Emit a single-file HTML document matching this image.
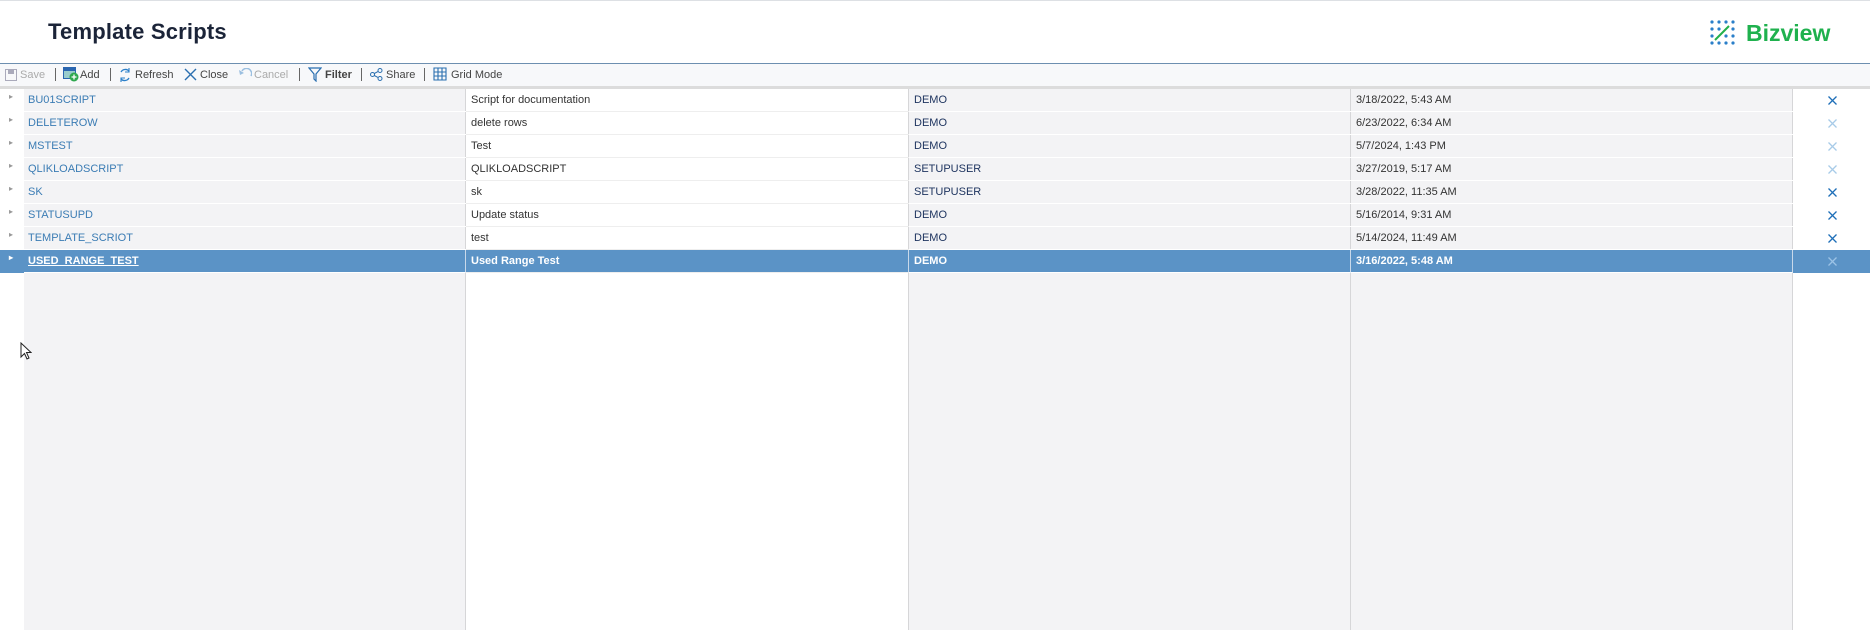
<!DOCTYPE html>
<html><head><meta charset="utf-8"><style>
*{box-sizing:border-box;margin:0;padding:0}
body{width:1870px;height:630px;overflow:hidden;background:#fff;font-family:"Liberation Sans",sans-serif;position:relative}
.abs{position:absolute}
.title{left:48px;top:19px;font-size:22px;font-weight:bold;color:#1b2438;letter-spacing:0.2px}
.tb{left:0;top:63px;width:1870px;height:23px;background:#f7f8fa;border-top:1px solid #6d8fb0}
.tbs{left:0;top:86px;width:1870px;height:3px;background:#dcdcdc}
.ti{position:absolute;top:69px;font-size:11px;color:#444;line-height:13px}
.sep{position:absolute;top:68px;width:1px;height:13px;background:#666}
.col{position:absolute;top:89px;height:541px}
.row{position:absolute;left:0;width:1870px;height:23px;font-size:11px;line-height:22px}
.c{position:absolute;top:0;height:23px;padding-left:4px;white-space:nowrap;border-bottom:1px solid #fff}
</style></head><body>
<div class="abs" style="left:0;top:0;width:1870px;height:1px;background:#dde0e4"></div>
<div class="abs title">Template Scripts</div>
<svg class="abs" style="left:1710px;top:20px" width="28" height="26" viewBox="0 0 28 26">
<g fill="#2a7fc9">
<circle cx="2" cy="2" r="1.6"/><circle cx="9" cy="2" r="1.6"/><circle cx="16" cy="2" r="1.6"/><circle cx="23" cy="2" r="1.6"/>
<circle cx="2" cy="9" r="1.6"/><circle cx="9" cy="9" r="1.6"/><circle cx="23" cy="9" r="1.6"/>
<circle cx="2" cy="16" r="1.6"/><circle cx="16" cy="16" r="1.6"/><circle cx="23" cy="16" r="1.6"/>
<circle cx="2" cy="23" r="1.6"/><circle cx="9" cy="23" r="1.6"/><circle cx="16" cy="23" r="1.6"/><circle cx="23" cy="23" r="1.6"/></g>
<line x1="5" y1="20" x2="19" y2="6" stroke="#22b04b" stroke-width="2"/></svg>
<div class="abs" style="left:1746px;top:20px;font-size:23px;font-weight:bold;color:#1fb14e">Bizview</div>

<div class="abs tb"></div><div class="abs tbs"></div>
<svg class="abs" style="left:5px;top:69px" width="12" height="12"><rect x="0.5" y="0.5" width="11" height="11" fill="none" stroke="#aab"/><rect x="3" y="1" width="6" height="4" fill="#aab"/></svg>
<div class="ti" style="left:20px;color:#aaa">Save</div><div class="sep" style="left:55px"></div>
<svg class="abs" style="left:63px;top:67px" width="16" height="15"><rect x="0" y="0" width="13" height="12" fill="#2a66b0"/><rect x="1" y="4" width="11" height="7" fill="#9cc"/><circle cx="11" cy="10" r="4.5" fill="#2fa84f"/><path d="M11 7.5v5M8.5 10h5" stroke="#fff" stroke-width="1.3"/></svg>
<div class="ti" style="left:80px">Add</div><div class="sep" style="left:110px"></div>
<svg class="abs" style="left:118px;top:68px" width="14" height="14"><path d="M3 4A5 5 0 0 1 11 3M11 10A5 5 0 0 1 3 11" fill="none" stroke="#2a7fc9" stroke-width="1.3"/><path d="M11 0v4h-4M3 14v-4h4" fill="none" stroke="#2a7fc9" stroke-width="1.1"/></svg>
<div class="ti" style="left:135px">Refresh</div>
<svg class="abs" style="left:184px;top:68px" width="13" height="13"><path d="M1 1L12 12M12 1L1 12" stroke="#2a6fb0" stroke-width="1.4"/></svg>
<div class="ti" style="left:200px">Close</div>
<svg class="abs" style="left:238px;top:68px" width="14" height="12"><path d="M4 3A5 5 0 0 1 13 8" fill="none" stroke="#9bbfe0" stroke-width="1.5"/><path d="M1 2l1 5 4-2z" fill="#9bbfe0"/></svg>
<div class="ti" style="left:254px;color:#aaa">Cancel</div><div class="sep" style="left:299px"></div>
<svg class="abs" style="left:308px;top:67px" width="14" height="15"><path d="M1 1H13L8 7V14L6 12V7Z" fill="none" stroke="#2a6fb0" stroke-width="1.2"/></svg>
<div class="ti" style="left:325px;font-weight:bold">Filter</div><div class="sep" style="left:361px"></div>
<svg class="abs" style="left:370px;top:68px" width="13" height="13"><circle cx="10" cy="2.5" r="2" fill="none" stroke="#2a6fb0"/><circle cx="2.5" cy="6.5" r="2" fill="none" stroke="#2a6fb0"/><circle cx="10" cy="10.5" r="2" fill="none" stroke="#2a6fb0"/><path d="M4.3 5.5L8.2 3.4M4.3 7.5L8.2 9.6" stroke="#2a6fb0"/></svg>
<div class="ti" style="left:386px">Share</div><div class="sep" style="left:424px"></div>
<svg class="abs" style="left:433px;top:67px" width="15" height="15"><path d="M1 1h12v12H1zM1 5h12M1 9h12M5 1v12M9 1v12" fill="none" stroke="#2a6fb0" stroke-width="1.1"/></svg>
<div class="ti" style="left:451px">Grid Mode</div>

<div class="col" style="left:0;width:24px;background:#fff"></div>
<div class="col" style="left:24px;width:442px;background:#f3f3f5;border-right:1px solid #d6d6d8"></div>
<div class="col" style="left:466px;width:443px;background:#fff;border-right:1px solid #d6d6d8"></div>
<div class="col" style="left:909px;width:442px;background:#f3f3f5;border-right:1px solid #d6d6d8"></div>
<div class="col" style="left:1351px;width:442px;background:#f3f3f5;border-right:1px solid #d6d6d8"></div>

<div id="rows"></div>
<script>
var d=[["BU01SCRIPT","Script for documentation","DEMO","3/18/2022, 5:43 AM",1],
["DELETEROW","delete rows","DEMO","6/23/2022, 6:34 AM",0],
["MSTEST","Test","DEMO","5/7/2024, 1:43 PM",0],
["QLIKLOADSCRIPT","QLIKLOADSCRIPT","SETUPUSER","3/27/2019, 5:17 AM",0],
["SK","sk","SETUPUSER","3/28/2022, 11:35 AM",1],
["STATUSUPD","Update status","DEMO","5/16/2014, 9:31 AM",1],
["TEMPLATE_SCRIOT","test","DEMO","5/14/2024, 11:49 AM",1],
["USED_RANGE_TEST","Used Range Test","DEMO","3/16/2022, 5:48 AM",0]];
var h="";
d.forEach(function(r,i){var s=i==7,y=89+i*23;
var bg=s?"#5b93c6":"transparent",tc=s?"#fff":"#333";
h+='<div class="row" style="top:'+y+'px;background:'+bg+(s?';font-weight:bold':'')+'">';
h+='<div class="c" style="left:0;width:24px;color:'+(s?'#fff':'#999')+';font-size:8px;padding-left:9px;line-height:16px;border-bottom:none">&#9656;</div>';
h+='<div class="c" style="left:24px;width:442px;color:'+(s?'#fff':'#3b7cb4')+';padding-left:4px;'+(s?'text-decoration:underline;border-right:1px solid #c9d9ea;':'')+'">'+r[0]+'</div>';
h+='<div class="c" style="left:466px;width:443px;color:'+tc+';padding-left:5px;border-bottom-color:#eee;'+(s?'border-right:1px solid #c9d9ea;':'')+'">'+r[1]+'</div>';
h+='<div class="c" style="left:909px;width:442px;color:'+(s?'#fff':'#1f3560')+';padding-left:5px;'+(s?'border-right:1px solid #c9d9ea;':'')+'">'+r[2]+'</div>';
h+='<div class="c" style="left:1351px;width:442px;color:'+(s?'#fff':'#333')+';padding-left:5px;'+(s?'border-right:1px solid #c9d9ea;':'')+'">'+r[3]+'</div>';
var xc=s?"#9cc3e6":(r[4]?"#1e6fb8":"#a8cbe8");
h+='<svg style="position:absolute;left:1828px;top:7px" width="9" height="9"><path d="M0.5 0.5L8.5 8.5M8.5 0.5L0.5 8.5" stroke="'+xc+'" stroke-width="1.3"/></svg>';
h+='</div>';});
document.getElementById("rows").innerHTML=h;
</script>
<svg class="abs" style="left:20px;top:342px" width="12" height="19"><path d="M1 1V15L4.5 11.5L7 17L9 16L6.5 10.5H11Z" fill="#fff" stroke="#222" stroke-width="1"/></svg>
</body></html>
